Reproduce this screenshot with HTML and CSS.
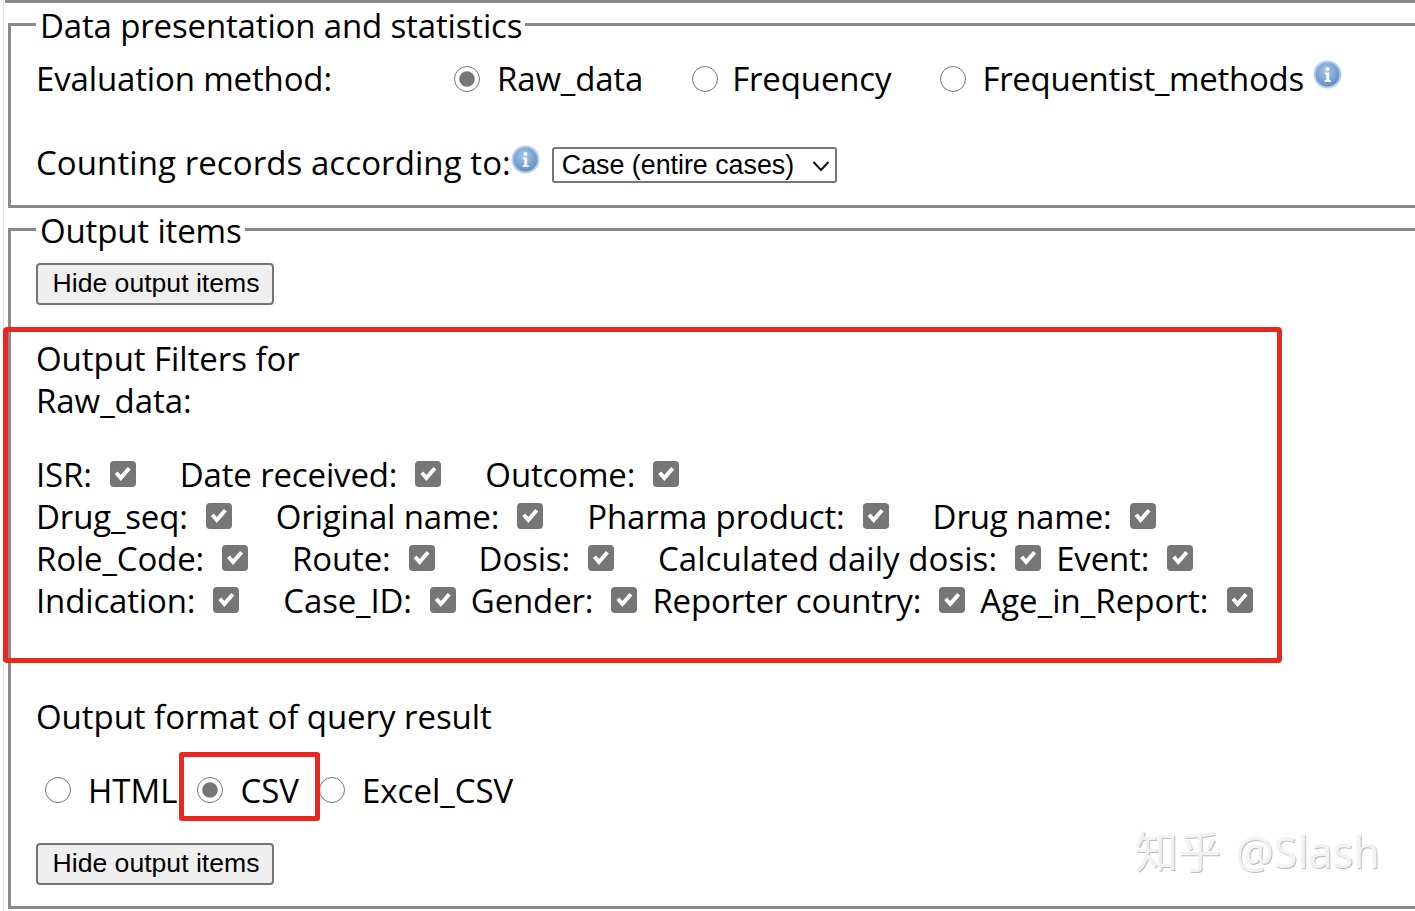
FILE: index.html
```html
<!DOCTYPE html>
<html lang="en">
<head>
<meta charset="utf-8">
<title>Data presentation and statistics</title>
<link rel="stylesheet" href="styles.css">
</head>
<body>
<svg class="defs" width="0" height="0" aria-hidden="true">
  <defs>
    <radialGradient id="infoFill" cx="45%" cy="35%" r="70%">
      <stop offset="0" stop-color="#a9c6e6"/>
      <stop offset="0.7" stop-color="#6f9dd2"/>
      <stop offset="1" stop-color="#5c86bc"/>
    </radialGradient>
    <symbol id="info" viewBox="0 0 28 28">
      <circle cx="14" cy="14" r="13.5" fill="#b9cfe8"/>
      <circle cx="14" cy="14" r="11.5" fill="url(#infoFill)"/>
      <circle cx="14" cy="8.6" r="1.9" fill="#fff"/>
      <path d="M11.6 12h4v7.4h1.5v1.8h-5.8v-1.8h1.5v-5.6h-1.2z" fill="#fff"/>
    </symbol>
  </defs>
</svg>

<div class="prev-rule"></div>

<fieldset class="group group-stats">
  <legend>Data presentation and statistics</legend>
  <div class="method-row">
    <span class="method-label">Evaluation method:</span>
    <label class="opt opt-raw"><input type="radio" name="method" checked>Raw_data</label>
    <label class="opt opt-freq"><input type="radio" name="method">Frequency</label>
    <label class="opt opt-freqm"><input type="radio" name="method">Frequentist_methods</label>
    <svg class="info info-method"><use href="#info"/></svg>
  </div>
  <div class="count-row">
    <span class="count-label">Counting records according to:</span>
    <svg class="info info-count"><use href="#info"/></svg>
    <span class="select-wrap">
      <select class="count-select"><option>Case (entire cases)</option></select>
      <svg class="chevron" viewBox="0 0 18 12"><path d="M1.5 2 9 10l7.5-8" fill="none" stroke="#111" stroke-width="2"/></svg>
    </span>
  </div>
</fieldset>

<fieldset class="group group-output">
  <legend>Output items</legend>
  <button type="button" class="toggle toggle-top">Hide output items</button>

  <div class="filters">
    <p class="filters-title">Output Filters for<br>Raw_data:</p>
    <div class="filter-row">
      <label class="check wide">ISR:<input type="checkbox" checked></label>
      <label class="check wide">Date received:<input type="checkbox" checked></label>
      <label class="check">Outcome:<input type="checkbox" checked></label>
    </div>
    <div class="filter-row">
      <label class="check wide">Drug_seq:<input type="checkbox" checked></label>
      <label class="check wide">Original name:<input type="checkbox" checked></label>
      <label class="check wide">Pharma product:<input type="checkbox" checked></label>
      <label class="check">Drug name:<input type="checkbox" checked></label>
    </div>
    <div class="filter-row">
      <label class="check wide">Role_Code:<input type="checkbox" checked></label>
      <label class="check wide">Route:<input type="checkbox" checked></label>
      <label class="check wide">Dosis:<input type="checkbox" checked></label>
      <label class="check narrow long">Calculated daily dosis:<input type="checkbox" checked></label>
      <label class="check">Event:<input type="checkbox" checked></label>
    </div>
    <div class="filter-row">
      <label class="check wide">Indication:<input type="checkbox" checked></label>
      <label class="check narrow">Case_ID:<input type="checkbox" checked></label>
      <label class="check narrow">Gender:<input type="checkbox" checked></label>
      <label class="check narrow">Reporter country:<input type="checkbox" checked></label>
      <label class="check long">Age_in_Report:<input type="checkbox" checked></label>
    </div>
  </div>

  <p class="format-title">Output format of query result</p>
  <div class="format-row">
    <label class="fmt"><input type="radio" name="format">HTML</label>
    <label class="fmt fmt-csv"><input type="radio" name="format" checked>CSV</label>
    <label class="fmt"><input type="radio" name="format">Excel_CSV</label>
  </div>
  <button type="button" class="toggle">Hide output items</button>
</fieldset>

<div class="watermark">知乎 @Slash</div>
</body>
</html>
```

FILE: styles.css
```css
html, body {
  margin: 0;
  padding: 0;
  height: 911px;
  overflow: hidden;
  background: #fff;
}
body {
  position: relative;
  font-family: "Open Sans", "Noto Sans", sans-serif;
  font-size: 33px;
  letter-spacing: -0.15px;
  line-height: 42px;
  color: #000;
}
body::before {
  content: "";
  position: absolute;
  left: 3px;
  top: 0;
  width: 1px;
  height: 100%;
  background: #e4e4e4;
}
.defs { position: absolute; }
.prev-rule {
  height: 3px;
  margin-left: 5px;
  background: #8a8a8a;
}
.group {
  margin: 0 0 0 8px;
  min-width: 0;
  border: 3px solid #8a8a8a;
  border-right: 0;
  padding: 0 0 0 25px;
  box-sizing: border-box;
}
.group legend {
  padding: 0 3px 0 4px;
  line-height: 46px;
  height: 42px;
}
.group-stats { height: 205px; }
.group-output { height: 701px; }

.method-row {
  display: flex;
  align-items: center;
  height: 42px;
  margin-top: 13px;
}
.method-label { width: 418px; }
.opt { display: flex; align-items: center; }
.opt input, .fmt input {
  width: 26px;
  height: 26px;
  margin: 0 17px 0 0;
  accent-color: #767676;
}
.opt-raw { margin-right: 49px; }
.opt-freq { margin-right: 49px; }
.opt-freq input { margin-right: 14px; }
.opt-freqm { letter-spacing: -0.3px; }
.opt-freqm input { margin-right: 16px; }
.info { width: 29px; height: 29px; flex: none; }
.info-method { margin: -10px 0 0 9px; }
.count-row {
  display: flex;
  align-items: center;
  height: 42px;
  margin-top: 42px;
}
.count-label { letter-spacing: 0.08px; }
.info-count { margin: -8px 0 0 0; }
.select-wrap {
  position: relative;
  display: block;
  margin: 4px 0 0 12px;
  height: 36px;
}
.count-select {
  appearance: none;
  display: block;
  width: 285px;
  height: 36px;
  font-family: "Liberation Sans", Arial, sans-serif;
  font-size: 26.8px;
  letter-spacing: 0;
  background: #fff;
  border: 2px solid #767676;
  border-radius: 3px;
  color: #000;
  padding: 0 0 0 8px;
}
.chevron {
  position: absolute;
  right: 7px;
  top: 13px;
  width: 18px;
  height: 12px;
  pointer-events: none;
}
.toggle {
  display: block;
  width: 238px;
  height: 42px;
  padding: 0 0 2px 2px;
  font-family: "Liberation Sans", Arial, sans-serif;
  font-size: 26.6px;
  letter-spacing: 0;
  background: #efefef;
  border: 2px solid #767676;
  border-radius: 4px;
  color: #000;
}
.toggle-top { margin-top: 13px; }
.filters {
  position: relative;
  margin-top: 24px;
}
.filters::before {
  content: "";
  position: absolute;
  left: -33px;
  top: -2px;
  width: 1279px;
  height: 336px;
  border: 5px solid #e8281e;
  border-radius: 4px;
  box-sizing: border-box;
  pointer-events: none;
}
.filters-title {
  margin: 0;
  padding-top: 9px;
  height: 116px;
  letter-spacing: -0.05px;
}
.filter-row { display: flex; height: 42px; align-items: center; }
.check { display: flex; align-items: center; }
.check input {
  position: relative;
  appearance: none;
  width: 26px;
  height: 26px;
  margin: -2px -1px 0 18px;
  background: #767676;
  border-radius: 4px;
}
.check input::after {
  content: "";
  position: absolute;
  inset: 0;
  background: #fff;
  clip-path: polygon(5px 13px, 8px 10.5px, 11px 14px, 18px 6px, 21px 8.5px, 11px 20px);
}
.wide { margin-right: 45px; }
.narrow { margin-right: 16px; }
.long { letter-spacing: 0.05px; }
.format-title { margin: 74px 0 0; letter-spacing: -0.05px; }
.format-row {
  display: flex;
  align-items: center;
  height: 42px;
  margin: 32px 0 31px 9px;
  letter-spacing: 0;
}
.fmt { display: flex; align-items: center; }
.fmt input { margin-top: -2px; }
.fmt-csv {
  position: relative;
  margin: 0 20px;
}
.fmt-csv::after {
  content: "";
  position: absolute;
  left: -18px;
  top: -18px;
  width: 141px;
  height: 69px;
  border: 5px solid #e8281e;
  border-radius: 3px;
  box-sizing: border-box;
  pointer-events: none;
}
.watermark {
  position: absolute;
  left: 1135px;
  top: 826px;
  font-family: "Noto Sans", "Noto Sans CJK SC", sans-serif;
  font-size: 43px;
  letter-spacing: 0;
  word-spacing: 3px;
  line-height: 52px;
  color: #f2f2f2;
  text-shadow: 1px 1px 0 #bdbdbd;
}
```
